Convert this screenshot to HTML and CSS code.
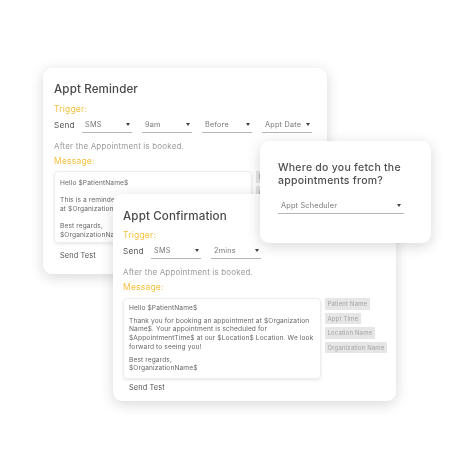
FILE: index.html
```html
<!DOCTYPE html>
<html lang="en">
<head>
<meta charset="utf-8">
<title>Appointment messages</title>
<link rel="stylesheet" href="styles.css">
</head>
<body>
<main class="canvas">
  <section class="card card-reminder">
    <h2 class="title">Appt Reminder</h2>
    <div class="label">Trigger:</div>
    <div class="send-row">
      <span class="send">Send</span>
      <div class="select"><span>SMS</span><i class="caret"></i></div>
      <div class="select"><span>9am</span><i class="caret"></i></div>
      <div class="select"><span>Before</span><i class="caret"></i></div>
      <div class="select"><span>Appt Date</span><i class="caret"></i></div>
    </div>
    <p class="note">After the Appointment is booked.</p>
    <div class="label">Message:</div>
    <div class="message-row">
      <div class="message message-short">
        <p>Hello $PatientName$</p>
        <p>This is a reminder for your appointment<br>at $OrganizationName$</p>
        <p>Best regards,<br>$OrganizationName$</p>
      </div>
      <div class="tags"><span class="tag">P</span><span class="tag">A</span></div>
    </div>
    <div class="send-test send-test-low">Send Test</div>
  </section>

  <section class="card card-confirm">
    <h2 class="title">Appt Confirmation</h2>
    <div class="label">Trigger:</div>
    <div class="send-row">
      <span class="send">Send</span>
      <div class="select"><span>SMS</span><i class="caret"></i></div>
      <div class="select"><span>2mins</span><i class="caret"></i></div>
    </div>
    <p class="note">After the Appointment is booked.</p>
    <div class="label">Message:</div>
    <div class="message-row">
      <div class="message">
        <p>Hello $PatientName$</p>
        <p>Thank you for booking an appointment at $Organization Name$. Your appointment is scheduled for $AppointmentTime$ at our $Location$ Location. We look forward to seeing you!</p>
        <p>Best regards,<br>$OrganizationName$</p>
      </div>
      <div class="tags">
        <span class="tag">Patient Name</span>
        <span class="tag">Appt Time</span>
        <span class="tag">Location Name</span>
        <span class="tag">Organization Name</span>
      </div>
    </div>
    <div class="send-test">Send Test</div>
  </section>

  <section class="card card-source">
    <h2 class="question">Where do you fetch the appointments from?</h2>
    <div class="select source-select"><span>Appt Scheduler</span><i class="caret"></i></div>
  </section>
</main>
</body>
</html>
```
FILE: styles.css
```css
* { box-sizing: border-box; }
html, body { margin: 0; background: #fff; }
body { font-family: "Inter", "Liberation Sans", sans-serif; color: #555; }
.canvas { position: relative; width: 474px; height: 474px; overflow: hidden; filter: blur(0.35px); }
.card {
  position: absolute;
  background: #fff;
  border-radius: 9px;
  box-shadow: 0 3px 14px rgba(0, 0, 0, 0.16);
  display: flex;
  flex-direction: column;
}
.card-reminder { left: 43px; top: 68px; width: 284px; height: 206px; padding: 13px 11px 0; }
.card-reminder .title { margin-bottom: 1px; }
.card-reminder .message-row { margin-top: 4px; }
.card-confirm { left: 113px; top: 194px; width: 283px; height: 207px; padding: 14px 10px 0; }
.card-source { left: 260px; top: 141px; width: 171px; height: 102px; padding: 20px 18px 0; }
.title { margin: 0; font-size: 11.6px; line-height: 16px; font-weight: 500; color: #4a4a4a; letter-spacing: 0.12px; }
.label { margin-top: 5px; font-size: 8.5px; line-height: 12px; color: #f5bf3c; letter-spacing: 0.2px; }
.send-row { display: flex; align-items: center; gap: 10px; margin-top: 2px; }
.send { font-size: 8.2px; color: #555; letter-spacing: 0.25px; width: 18px; flex: none; }
.select {
  display: flex;
  justify-content: space-between;
  align-items: center;
  width: 50px;
  flex: none;
  height: 16px;
  padding: 0 2px 1px 3px;
  border-bottom: 1px solid #b5b5b5;
  font-size: 7.3px;
  color: #777;
  letter-spacing: 0.2px;
  white-space: nowrap;
}
.caret { width: 0; height: 0; border-left: 2.5px solid transparent; border-right: 2.5px solid transparent; border-top: 3px solid #444; flex: none; }
.note { margin: 8px 0 0; font-size: 8px; line-height: 11px; color: #999; letter-spacing: 0.17px; }
.note + .label { margin-top: 3px; }
.message-row { display: flex; align-items: flex-start; gap: 3.5px; margin-top: 5px; }
.message {
  width: 198px;
  flex: none;
  height: 81px;
  padding: 5px 5px;
  border: 1px solid #eee;
  border-radius: 4px;
  box-shadow: 0 1px 3px rgba(0, 0, 0, 0.1);
  font-size: 6.6px;
  line-height: 8.7px;
  color: #666;
  letter-spacing: 0.12px;
}
.message p { margin: 0 0 4px; }
.message-short { height: 72px; padding-top: 7px; }
.message-short p { margin-bottom: 8.5px; }
.tags { display: flex; flex-direction: column; align-items: flex-start; gap: 3px; }
.tag { background: #e6e6e6; color: #a3a3a3; font-size: 6px; line-height: 11.5px; padding: 0 3px; white-space: nowrap; letter-spacing: 0.15px; }
.send-test { margin-top: 3px; padding-left: 6px; font-size: 7.4px; line-height: 11px; color: #555; letter-spacing: 0.1px; }
.send-test-low { margin-top: 7px; }
.question { margin: 0; font-size: 10.5px; line-height: 13px; font-weight: 500; color: #4f4f4f; letter-spacing: 0.25px; }
.source-select { margin-top: 10px; height: 17px; width: 126px; padding: 0 3px; }
```
